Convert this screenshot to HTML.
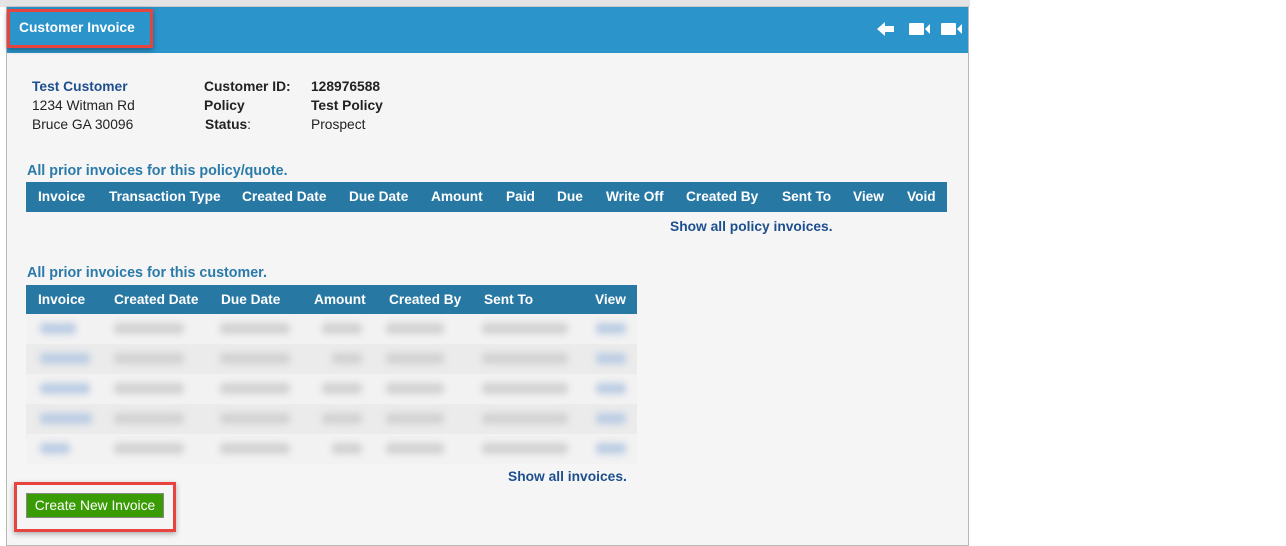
<!DOCTYPE html>
<html><head><style>
*{margin:0;padding:0;box-sizing:border-box}
body{width:1286px;height:532px;background:#fff;font-family:"Liberation Sans",Arial,sans-serif;position:relative;overflow:hidden}
.a{position:absolute;white-space:nowrap}
#top{position:absolute;left:0;top:0;width:970px;height:7px;background:#e4e4e4}
#panel{position:absolute;left:6px;top:6px;width:963px;height:540px;background:#f5f5f5;border:1px solid #b8b8b8;border-top:1px solid #c8c8c8}
#hdr{position:absolute;left:7px;top:7px;width:961px;height:46px;background:#2b94cb}
.t{font-size:13.8px;color:#222;line-height:19px}
.b{font-weight:bold}
.th{position:absolute;background:#2878a4;height:30px}
.th span{position:absolute;top:7px;color:#fff;font-weight:bold;font-size:13.7px;white-space:nowrap}
.sec{font-size:14.3px;font-weight:bold;color:#2a7aaa}
.lnk{font-size:13.8px;font-weight:bold;color:#1d4f8e}
.row{position:absolute;left:26px;width:611px;height:30px}
.bl{position:absolute;top:9px;height:11px;filter:blur(3.5px);border-radius:4px}
.g{background:#d2d2d2}.u{background:#bccde4}
</style></head><body>
<div id="top"></div>
<div id="panel"></div>
<div id="hdr"></div>
<div class="a" style="left:7px;top:9px;width:146px;height:39px;border:3px solid #e8443f;box-shadow:0 2px 5px rgba(0,0,0,.35)"></div>
<div class="a b" style="left:19px;top:20px;color:#fff;font-size:13.8px">Customer Invoice</div>
<svg class="a" style="left:876px;top:20px" width="90" height="18" viewBox="0 0 90 18">
<path d="M1 9 L9 2 L9 6 L18 6 L18 12 L9 12 L9 16 Z" fill="#fff"/>
<rect x="33" y="3" width="15" height="12" rx="1" fill="#fff"/><path d="M49 9 L54 4 L54 14 Z" fill="#fff"/>
<rect x="65" y="3" width="15" height="12" rx="1" fill="#fff"/><path d="M81 9 L86 4 L86 14 Z" fill="#fff"/>
</svg>
<div class="a t b" style="left:32px;top:77px;color:#1d4f8e">Test Customer</div>
<div class="a t" style="left:32px;top:96px">1234 Witman Rd</div>
<div class="a t" style="left:32px;top:115px">Bruce GA 30096</div>
<div class="a t b" style="left:204px;top:77px">Customer ID:</div>
<div class="a t b" style="left:204px;top:96px">Policy</div>
<div class="a t" style="left:205px;top:115px"><b>Status</b>:</div>
<div class="a t b" style="left:311px;top:77px">128976588</div>
<div class="a t b" style="left:311px;top:96px">Test Policy</div>
<div class="a t" style="left:311px;top:115px">Prospect</div>
<div class="a sec" style="left:27px;top:163px">All prior invoices for this policy/quote.</div>
<div class="th" style="left:26px;top:182px;width:921px">
<span style="left:12px">Invoice</span><span style="left:83px">Transaction Type</span><span style="left:216px">Created Date</span><span style="left:323px">Due Date</span><span style="left:405px">Amount</span><span style="left:480px">Paid</span><span style="left:531px">Due</span><span style="left:580px">Write Off</span><span style="left:660px">Created By</span><span style="left:756px">Sent To</span><span style="left:827px">View</span><span style="left:881px">Void</span>
</div>
<div class="a lnk" style="left:670px;top:219px">Show all policy invoices.</div>
<div class="a sec" style="left:27px;top:265px">All prior invoices for this customer.</div>
<div class="th" style="left:26px;top:285px;width:611px">
<span style="left:12px">Invoice</span><span style="left:88px">Created Date</span><span style="left:195px">Due Date</span><span style="left:288px">Amount</span><span style="left:363px">Created By</span><span style="left:458px">Sent To</span><span style="left:569px">View</span>
</div>
<div class="row" style="top:314px;background:#f2f2f2"><div class="bl u" style="left:14px;width:36px"></div><div class="bl g" style="left:88px;width:70px"></div><div class="bl g" style="left:194px;width:70px"></div><div class="bl g" style="left:296px;width:40px"></div><div class="bl g" style="left:360px;width:58px"></div><div class="bl g" style="left:456px;width:86px"></div><div class="bl u" style="left:570px;width:30px"></div></div>
<div class="row" style="top:344px;background:#ebebeb"><div class="bl u" style="left:14px;width:50px"></div><div class="bl g" style="left:88px;width:70px"></div><div class="bl g" style="left:194px;width:70px"></div><div class="bl g" style="left:306px;width:30px"></div><div class="bl g" style="left:360px;width:58px"></div><div class="bl g" style="left:456px;width:86px"></div><div class="bl u" style="left:570px;width:30px"></div></div>
<div class="row" style="top:374px;background:#f2f2f2"><div class="bl u" style="left:14px;width:50px"></div><div class="bl g" style="left:88px;width:70px"></div><div class="bl g" style="left:194px;width:70px"></div><div class="bl g" style="left:296px;width:40px"></div><div class="bl g" style="left:360px;width:58px"></div><div class="bl g" style="left:456px;width:86px"></div><div class="bl u" style="left:570px;width:30px"></div></div>
<div class="row" style="top:404px;background:#ebebeb"><div class="bl u" style="left:14px;width:52px"></div><div class="bl g" style="left:88px;width:70px"></div><div class="bl g" style="left:194px;width:70px"></div><div class="bl g" style="left:296px;width:40px"></div><div class="bl g" style="left:360px;width:58px"></div><div class="bl g" style="left:456px;width:86px"></div><div class="bl u" style="left:570px;width:30px"></div></div>
<div class="row" style="top:434px;background:#f2f2f2"><div class="bl u" style="left:14px;width:30px"></div><div class="bl g" style="left:88px;width:70px"></div><div class="bl g" style="left:194px;width:70px"></div><div class="bl g" style="left:306px;width:30px"></div><div class="bl g" style="left:360px;width:58px"></div><div class="bl g" style="left:456px;width:86px"></div><div class="bl u" style="left:570px;width:30px"></div></div>
<div class="a lnk" style="left:508px;top:469px">Show all invoices.</div>
<div class="a" style="left:14px;top:482px;width:162px;height:50px;border:3px solid #e8443f;box-shadow:0 2px 5px rgba(0,0,0,.3)"></div>
<div class="a" style="left:26px;top:493px;width:138px;height:25px;background:#3a9c05;border:1px solid #888;color:#fff;font-size:13.8px;line-height:23px;text-align:center">Create New Invoice</div>
</body></html>
